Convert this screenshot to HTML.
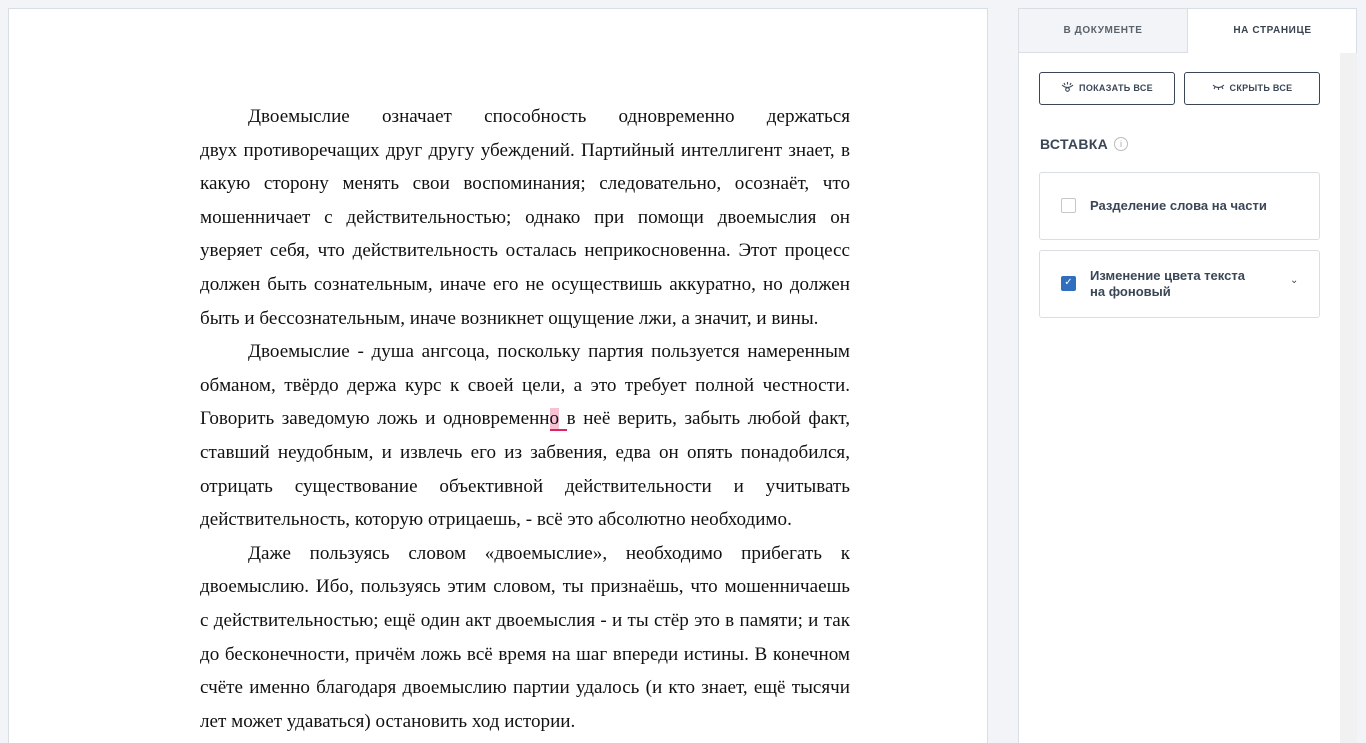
<!DOCTYPE html>
<html><head><meta charset="utf-8"><style>
*{box-sizing:border-box;margin:0;padding:0}
html,body{width:1366px;height:743px;overflow:hidden}
body{background:#f2f4f7;position:relative;font-family:"Liberation Sans",sans-serif}
.doc{position:absolute;left:8px;top:8px;width:980px;height:745px;background:#fff;border:1px solid #d9dee5}
.txt{position:absolute;left:200px;top:100px;width:650px;font-family:"Liberation Serif",serif;font-size:19.1px;color:#111}
.l{height:33.6px;line-height:33.6px;text-align:justify;text-align-last:justify;white-space:nowrap}
.l.e{text-align-last:left}
.i{padding-left:48px}
.hl{background:#f7c2d4}
.ul{border-bottom:2px solid #e0245e}
.side{position:absolute;left:1018px;top:8px;width:339px;height:745px;background:#fff;border:1px solid #d9dee5}
.tab{position:absolute;top:0;height:44px;line-height:44px;text-align:center;font-size:10px;font-weight:bold;letter-spacing:.6px;color:#5a626c}
.t1{left:0;width:169px;background:#f2f4f7;border-right:1px solid #d9dee5;border-bottom:1px solid #d9dee5}
.t2{left:169px;width:169px;color:#3a4450}
.sb{position:absolute;left:321px;top:44px;width:17px;height:720px;background:#f1f1f1}
.btn{position:absolute;top:63px;width:136px;height:33px;border:1.5px solid #3a4656;border-radius:3px;font-size:9px;font-weight:bold;color:#3a4656;line-height:31px;text-align:center;letter-spacing:.3px}
.h{position:absolute;left:21px;top:127px;font-size:14px;font-weight:bold;color:#3a4656;letter-spacing:.3px}
.info{position:absolute;left:95px;top:128px;width:14px;height:14px;border:1px solid #bbb;border-radius:50%;font-size:9px;color:#aaa;text-align:center;line-height:12px}
.card{position:absolute;left:20px;width:281px;height:68px;border:1px solid #d9dee5;border-radius:3px}
.cb{position:absolute;left:21px;width:15px;height:15px;border:1.5px solid #c4c8cd;border-radius:2px}
.cl{position:absolute;left:50px;font-size:13px;font-weight:bold;color:#3a4656;line-height:16px}
</style></head><body>
<div class="doc"></div>
<div class="txt">
<div class="l i">Двоемыслие означает способность одновременно держаться</div>
<div class="l">двух противоречащих друг другу убеждений. Партийный интеллигент знает, в</div>
<div class="l">какую сторону менять свои воспоминания; следовательно, осознаёт, что</div>
<div class="l">мошенничает с действительностью; однако при помощи двоемыслия он</div>
<div class="l">уверяет себя, что действительность осталась неприкосновенна. Этот процесс</div>
<div class="l">должен быть сознательным, иначе его не осуществишь аккуратно, но должен</div>
<div class="l e">быть и бессознательным, иначе возникнет ощущение лжи, а значит, и вины.</div>
<div class="l i">Двоемыслие - душа ангсоца, поскольку партия пользуется намеренным</div>
<div class="l">обманом, твёрдо держа курс к своей цели, а это требует полной честности.</div>
<div class="l">Говорить заведомую ложь и одновременн<span class="ul"><span class="hl">о</span> </span>в неё верить, забыть любой факт,</div>
<div class="l">ставший неудобным, и извлечь его из забвения, едва он опять понадобился,</div>
<div class="l">отрицать существование объективной действительности и учитывать</div>
<div class="l e">действительность, которую отрицаешь, - всё это абсолютно необходимо.</div>
<div class="l i">Даже пользуясь словом «двоемыслие», необходимо прибегать к</div>
<div class="l">двоемыслию. Ибо, пользуясь этим словом, ты признаёшь, что мошенничаешь</div>
<div class="l">с действительностью; ещё один акт двоемыслия - и ты стёр это в памяти; и так</div>
<div class="l">до бесконечности, причём ложь всё время на шаг впереди истины. В конечном</div>
<div class="l">счёте именно благодаря двоемыслию партии удалось (и кто знает, ещё тысячи</div>
<div class="l e">лет может удаваться) остановить ход истории.</div>
</div>
<div class="side">
<div class="tab t1">В ДОКУМЕНТЕ</div>
<div class="tab t2">НА СТРАНИЦЕ</div>
<div class="sb"></div>
<div class="btn" style="left:20px"><svg width="13" height="10" viewBox="0 0 13 10" style="vertical-align:-1px;margin-right:5px"><path d="M1 3Q6.5 8 12 3M3 1l1 2M6.5 0v2.5M10 1l-1 2" stroke="#3a4656" fill="none" stroke-width="1.1"/><circle cx="6.5" cy="7.5" r="1.8" stroke="#3a4656" fill="none" stroke-width="1.1"/></svg>ПОКАЗАТЬ ВСЕ</div>
<div class="btn" style="left:165px"><svg width="13" height="8" viewBox="0 0 13 8" style="vertical-align:0;margin-right:5px"><path d="M1 2Q6.5 7 12 2M3 4l-1 2M6.5 5v2M10 4l1 2" stroke="#3a4656" fill="none" stroke-width="1.1"/></svg>СКРЫТЬ ВСЕ</div>
<div class="h">ВСТАВКА</div><div class="info">i</div>
<div class="card" style="top:163px"><div class="cb" style="top:25px"></div><div class="cl" style="top:25px">Разделение слова на части</div></div>
<div class="card" style="top:241px"><div class="cb" style="top:25px;background:#2f6fbd;border-color:#2f6fbd;color:#fff;font-size:10px;line-height:12px;text-align:center">✓</div><div class="cl" style="top:17px">Изменение цвета текста<br>на фоновый</div><div style="position:absolute;left:250px;top:24px;font-size:10px;color:#3a4656">⌄</div></div>
</div>
</body></html>
